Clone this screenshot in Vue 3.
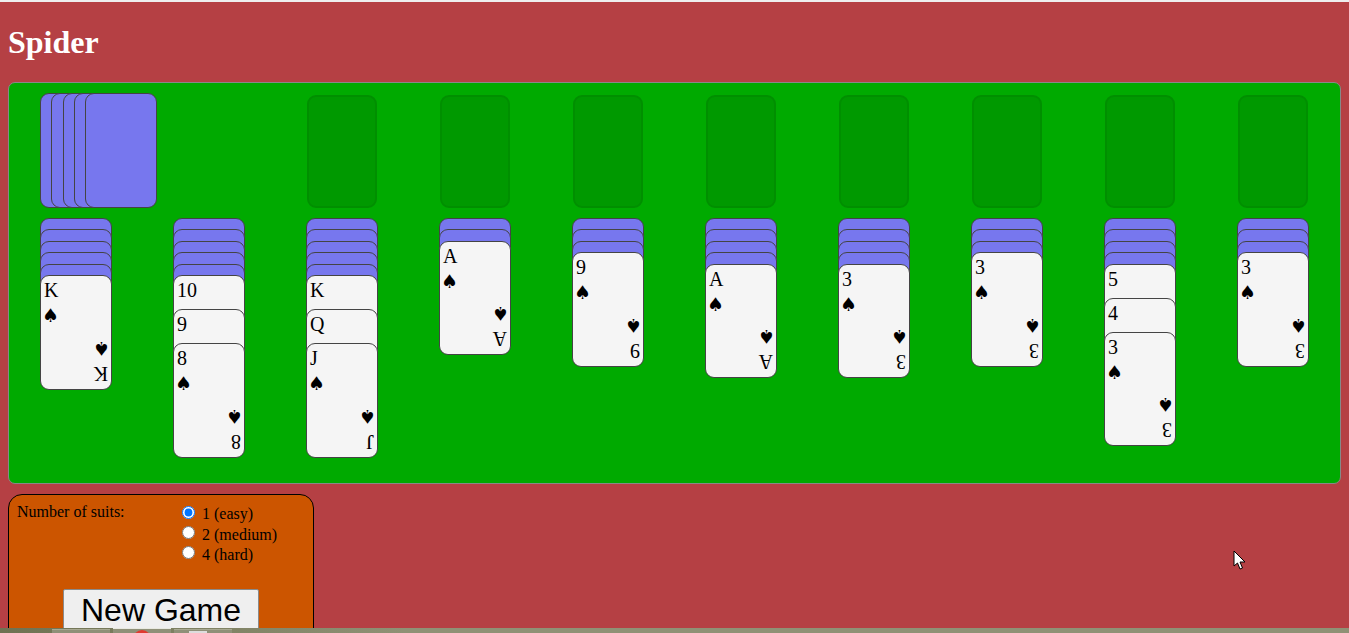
<template>
  <div class="page">
    <h1 class="title">Spider</h1>

    <div class="board">
      <div class="stock">
        <div v-for="n in 5" :key="n" class="card back stock-card"></div>
      </div>
      <div class="spacer"></div>
      <div v-for="n in 8" :key="n" class="slot"></div>

      <div v-for="(col, i) in columns" :key="i" class="column">
        <div v-for="n in col.down" :key="n" class="card back down"></div>
        <div
          v-for="(rank, j) in col.up"
          :key="rank"
          class="card face"
        >
          <div class="corner">
            <span class="rank">{{ rank }}</span>
            <span v-if="j === col.up.length - 1" class="suit">♠</span>
          </div>
          <!-- Las cartas tapadas solo enseñan el valor -->
          <div v-if="j === col.up.length - 1" class="corner flipped">
            <span class="rank">{{ rank }}</span>
            <span class="suit">♠</span>
          </div>
        </div>
      </div>
    </div>

    <div class="panel">
      <div class="options">
        <span class="options-label">Number of suits:</span>
        <div class="radios">
          <label v-for="opt in suitOptions" :key="opt.value" class="radio-row">
            <input v-model="suits" type="radio" name="suits" :value="opt.value" />
            <span>{{ opt.label }}</span>
          </label>
        </div>
      </div>
      <button class="new-game">New Game</button>
    </div>

    <div class="taskbar">
      <div class="task"></div>
      <div class="task active"><span class="task-dot"></span></div>
      <div class="task"><span class="task-doc"></span></div>
    </div>

    <svg class="cursor" width="14" height="21" viewBox="0 0 14 21">
      <path d="M1 1 L1 16 L4.5 13 L7 19 L9.5 18 L7 12 L12 12 Z" fill="#fff" stroke="#000" stroke-width="1" />
    </svg>
  </div>
</template>

<script setup>
import { ref } from 'vue';

const suits = ref(1);

const suitOptions = [
  { value: 1, label: '1 (easy)' },
  { value: 2, label: '2 (medium)' },
  { value: 4, label: '4 (hard)' }
];

// Cartas boca abajo y boca arriba de cada columna
const columns = [
  { down: 5, up: ['K'] },
  { down: 5, up: ['10', '9', '8'] },
  { down: 5, up: ['K', 'Q', 'J'] },
  { down: 2, up: ['A'] },
  { down: 3, up: ['9'] },
  { down: 4, up: ['A'] },
  { down: 4, up: ['3'] },
  { down: 3, up: ['3'] },
  { down: 4, up: ['5', '4', '3'] },
  { down: 3, up: ['3'] }
];
</script>

<style>
html,
body {
  margin: 0;
  height: 100%;
  overflow: hidden;
}
</style>

<style scoped>
.page {
  box-sizing: border-box;
  position: relative;
  height: 633px;
  overflow: hidden;
  padding: 0 8px;
  border-top: 2px solid #eeeeee;
  background: #b54044;
  font-family: "Liberation Serif", serif;
  font-size: 16px;
  color: #000;
}

.title {
  margin: 21.5px 0;
  font-size: 32px;
  line-height: 37px;
  font-weight: bold;
  color: #fff;
}

.board {
  box-sizing: border-box;
  height: 402px;
  display: grid;
  grid-template-columns: repeat(10, 72px);
  grid-template-rows: 115px 1fr;
  column-gap: 61px;
  row-gap: 10px;
  padding: 10px 0 0 31px;
  background: #00aa00;
  border: 1px solid #888;
  border-radius: 7px;
}

.stock {
  display: flex;
}

.stock-card {
  flex: none;
  height: 115px;
  margin-right: -60.75px;
}

.slot {
  box-sizing: border-box;
  width: 70px;
  height: 113px;
  margin: 2px 0 0 1px;
  background: #009900;
  border: 2px solid #008f00;
  border-radius: 9px;
}

.column {
  display: flex;
  flex-direction: column;
  align-items: stretch;
}

.card {
  box-sizing: border-box;
  position: relative;
  flex: none;
  width: 72px;
  height: 114.5px;
  border: 1px solid #444;
  border-radius: 9px;
}

.back {
  background: #7777ee;
}

.down {
  margin-bottom: -103.1px;
}

.face {
  display: flex;
  flex-direction: column;
  justify-content: space-between;
  margin-bottom: -80.5px;
  padding: 2px 3px 3px;
  background: #f5f5f5;
}

.column .card:last-child {
  margin-bottom: 0;
}

.corner {
  display: flex;
  flex-direction: column;
  font-size: 20px;
  line-height: 24px;
}

.flipped {
  transform: rotate(180deg);
}

.suit {
  margin-left: -2px;
  font-family: "DejaVu Sans", sans-serif;
  font-size: 19px;
  line-height: 27px;
}

.panel {
  box-sizing: border-box;
  width: 306px;
  height: 160px;
  margin-top: 10px;
  padding: 8px;
  background: #cc5500;
  border: 1px solid #000;
  border-radius: 14px;
}

.options {
  display: flex;
  height: 85.5px;
}

.options-label {
  width: 165px;
  flex: none;
}

.radios {
  display: flex;
  flex-direction: column;
  padding-top: 1px;
}

.radio-row {
  display: flex;
  align-items: center;
  height: 20.4px;
  gap: 7px;
}

.radio-row input {
  margin: -4px 0 0;
  width: 13px;
  height: 13px;
}

.new-game {
  display: block;
  box-sizing: border-box;
  width: 196px;
  height: 43px;
  margin-left: 46px;
  padding: 0;
  font-family: "Liberation Sans", Arial, sans-serif;
  font-size: 32px;
  color: #000;
  background: #efefef;
  border: 1px solid #8a8a8a;
  border-radius: 2px;
}

.taskbar {
  position: absolute;
  left: 0;
  right: 0;
  bottom: 0;
  height: 5px;
  display: flex;
  gap: 3px;
  padding-left: 52px;
  background: linear-gradient(to right, #6f7252, #8f9175 30%);
}

.task {
  position: relative;
  width: 58px;
  margin-top: 1px;
  overflow: hidden;
  background: #8f9078;
  border-top: 1px solid #a8a992;
}

.task.active {
  border-top-color: #e8e8e0;
  margin-top: 0;
}

.task-dot {
  position: absolute;
  left: 20px;
  top: 1px;
  width: 18px;
  height: 18px;
  border-radius: 50%;
  background: #e03a30;
}

.task-doc {
  position: absolute;
  left: 15px;
  top: 1px;
  width: 18px;
  height: 6px;
  background: #ddd;
}

.cursor {
  position: absolute;
  left: 1233px;
  top: 548px;
}
</style>
